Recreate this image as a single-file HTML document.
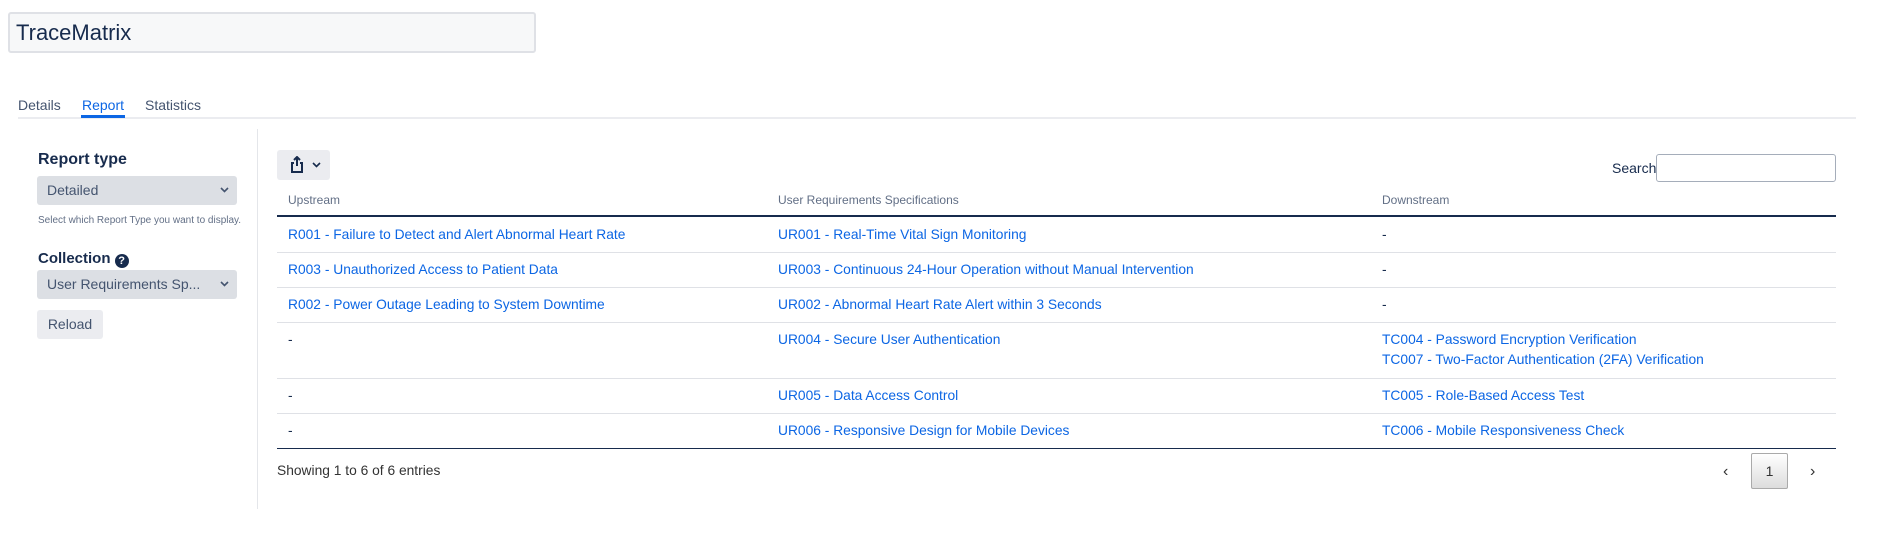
<!DOCTYPE html>
<html><head><meta charset="utf-8"><style>
*{box-sizing:border-box;margin:0;padding:0}
body{width:1883px;height:549px;background:#fff;font-family:"Liberation Sans",sans-serif;color:#172b4d;position:relative;overflow:hidden}
.a{position:absolute}
a{color:#0c66e4;text-decoration:none}
.title{left:8px;top:12px;width:528px;height:41px;border:2px solid #dfe1e6;border-radius:3px;background:#f7f8f9;font-size:22px;padding:6px 0 0 6px;color:#172b4d}
.tab{top:97px;font-size:14px;color:#44546f}
.sel{background:#dcdfe4;border-radius:3px;font-size:14px;color:#44546f;padding:6px 10px;height:29px}
.sel svg{position:absolute;right:8px;top:11px}
.row{position:absolute;left:277px;width:1559px;border-top:1px solid #dfe1e6}
.c{position:absolute;font-size:13.8px;line-height:20px}
.h{font-size:12px;color:#626f86}
</style></head><body>
<div class="a title">TraceMatrix</div>
<div class="a tab" style="left:18px">Details</div>
<div class="a tab" style="left:82px;color:#0c66e4">Report</div>
<div class="a tab" style="left:145px">Statistics</div>
<div class="a" style="left:18px;top:117px;width:1838px;height:2px;background:#ebecf0"></div>
<div class="a" style="left:81px;top:115px;width:44px;height:3px;background:#0c66e4"></div>
<div class="a" style="left:257px;top:129px;width:1px;height:380px;background:#e4e6ea"></div>

<div class="a" style="left:38px;top:151px;font-size:16px;font-weight:bold">Report type</div>
<div class="a sel" style="left:37px;top:176px;width:200px">Detailed<svg width="9" height="6"><path d="M1 1l3.5 3.5L8 1" stroke="#44546f" stroke-width="1.6" fill="none"/></svg></div>
<div class="a" style="left:38px;top:215px;font-size:10px;color:#626f86">Select which Report Type you want to display.</div>
<div class="a" style="left:38px;top:250px;font-size:15px;font-weight:bold">Collection <span style="display:inline-block;width:14px;height:14px;border-radius:50%;background:#172b4d;color:#fff;font-size:11px;text-align:center;line-height:14px;vertical-align:-1px">?</span></div>
<div class="a sel" style="left:37px;top:270px;width:200px">User Requirements Sp...<svg width="9" height="6"><path d="M1 1l3.5 3.5L8 1" stroke="#44546f" stroke-width="1.6" fill="none"/></svg></div>
<div class="a" style="left:37px;top:310px;width:66px;height:29px;background:#ebecf0;border-radius:3px;font-size:14px;color:#44546f;text-align:center;line-height:29px">Reload</div>

<div class="a" style="left:277px;top:150px;width:53px;height:30px;background:#ebecf0;border-radius:3px">
<svg class="a" style="left:12px;top:6px" width="16" height="18" viewBox="0 0 16 18"><path d="M8 1v9M5 4l3-3 3 3M5 7H3v9h10V7h-2" stroke="#172b4d" stroke-width="2" fill="none"/></svg>
<svg class="a" style="left:35px;top:12px" width="9" height="6"><path d="M1 1l3.5 3.5L8 1" stroke="#172b4d" stroke-width="1.6" fill="none"/></svg></div>
<div class="a" style="left:1612px;top:160px;font-size:14px">Search</div>
<div class="a" style="left:1656px;top:154px;width:180px;height:28px;border:1px solid #a5adba;border-radius:3px"></div>

<div class="c h" style="left:288px;top:190px">Upstream</div>
<div class="c h" style="left:778px;top:190px">User Requirements Specifications</div>
<div class="c h" style="left:1382px;top:190px">Downstream</div>
<div class="a" style="left:277px;top:215px;width:1559px;height:2px;background:#172b4d"></div>
<div class="row" style="top:252px"></div><div class="row" style="top:287px"></div><div class="row" style="top:322px"></div><div class="row" style="top:378px"></div><div class="row" style="top:413px"></div>
<div class="a" style="left:277px;top:448px;width:1559px;height:1px;background:#172b4d"></div>

<div class="c" style="left:288px;top:225px"><a>R001 - Failure to Detect and Alert Abnormal Heart Rate</a></div>
<div class="c" style="left:778px;top:225px"><a>UR001 - Real-Time Vital Sign Monitoring</a></div>
<div class="c" style="left:1382px;top:225px">-</div>
<div class="c" style="left:288px;top:260px"><a>R003 - Unauthorized Access to Patient Data</a></div>
<div class="c" style="left:778px;top:260px"><a>UR003 - Continuous 24-Hour Operation without Manual Intervention</a></div>
<div class="c" style="left:1382px;top:260px">-</div>
<div class="c" style="left:288px;top:295px"><a>R002 - Power Outage Leading to System Downtime</a></div>
<div class="c" style="left:778px;top:295px"><a>UR002 - Abnormal Heart Rate Alert within 3 Seconds</a></div>
<div class="c" style="left:1382px;top:295px">-</div>
<div class="c" style="left:288px;top:330px">-</div>
<div class="c" style="left:778px;top:330px"><a>UR004 - Secure User Authentication</a></div>
<div class="c" style="left:1382px;top:330px"><a>TC004 - Password Encryption Verification</a><br><a>TC007 - Two-Factor Authentication (2FA) Verification</a></div>
<div class="c" style="left:288px;top:386px">-</div>
<div class="c" style="left:778px;top:386px"><a>UR005 - Data Access Control</a></div>
<div class="c" style="left:1382px;top:386px"><a>TC005 - Role-Based Access Test</a></div>
<div class="c" style="left:288px;top:421px">-</div>
<div class="c" style="left:778px;top:421px"><a>UR006 - Responsive Design for Mobile Devices</a></div>
<div class="c" style="left:1382px;top:421px"><a>TC006 - Mobile Responsiveness Check</a></div>

<div class="c" style="left:277px;top:461px;color:#333">Showing 1 to 6 of 6 entries</div>
<div class="c" style="left:1723px;top:462px;color:#333;font-size:16px">‹</div>
<div class="a" style="left:1751px;top:453px;width:37px;height:36px;border:1px solid #aaa;border-radius:2px;background:linear-gradient(#fff,#ddd);font-size:14px;text-align:center;line-height:34px;color:#333">1</div>
<div class="c" style="left:1810px;top:462px;color:#333;font-size:16px">›</div>
</body></html>
